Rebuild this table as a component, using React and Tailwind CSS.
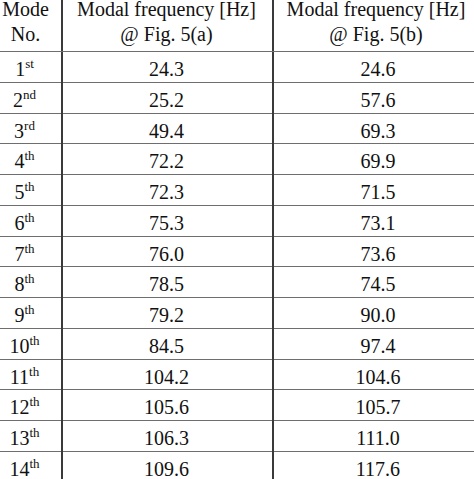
import React from "react";

const rows = [
  ["1", "st", "24.3", "24.6"],
  ["2", "nd", "25.2", "57.6"],
  ["3", "rd", "49.4", "69.3"],
  ["4", "th", "72.2", "69.9"],
  ["5", "th", "72.3", "71.5"],
  ["6", "th", "75.3", "73.1"],
  ["7", "th", "76.0", "73.6"],
  ["8", "th", "78.5", "74.5"],
  ["9", "th", "79.2", "90.0"],
  ["10", "th", "84.5", "97.4"],
  ["11", "th", "104.2", "104.6"],
  ["12", "th", "105.6", "105.7"],
  ["13", "th", "106.3", "111.0"],
  ["14", "th", "109.6", "117.6"],
];

const App = () => {
  return (
    <div className="w-[474px] h-[479px] overflow-hidden bg-white text-[#111] text-[20px] font-['Liberation_Serif','Times_New_Roman',serif]">
      <div className="w-[482px]">
        {/* Header */}
        <div className="grid grid-cols-[63px_211px_208px] h-[51px] leading-[25px]">
          <div className="border-r-2 border-[#3a3a3a] text-center pr-[10px]">
            <div className="-mt-[3px]">
              Mode
              <br />
              No.
            </div>
          </div>
          <div className="border-r-2 border-[#3a3a3a] text-center pr-[2px]">
            <div className="-mt-[3px]">
              Modal frequency [Hz]
              <br />
              @ Fig. 5(a)
            </div>
          </div>
          <div className="text-center pr-[4px]">
            <div className="-mt-[3px]">
              Modal frequency [Hz]
              <br />
              @ Fig. 5(b)
            </div>
          </div>
        </div>

        {/* Rows */}
        {rows.map(([n, suf, a, b]) => (
          <div
            key={n}
            className="grid grid-cols-[63px_211px_208px] h-[30.77px] border-t-[1.5px] border-[#6e6e6e] leading-[30px]"
          >
            <div className="border-r-2 border-[#3a3a3a] text-center pr-[12px] pt-[2px]">
              {n}
              <sup className="text-[13px] relative -top-[8px]">{suf}</sup>
            </div>
            <div className="border-r-2 border-[#3a3a3a] text-center pr-[2px] pt-[2px]">
              {a}
            </div>
            <div className="text-center pt-[2px]">{b}</div>
          </div>
        ))}
      </div>
    </div>
  );
};

export default App;
